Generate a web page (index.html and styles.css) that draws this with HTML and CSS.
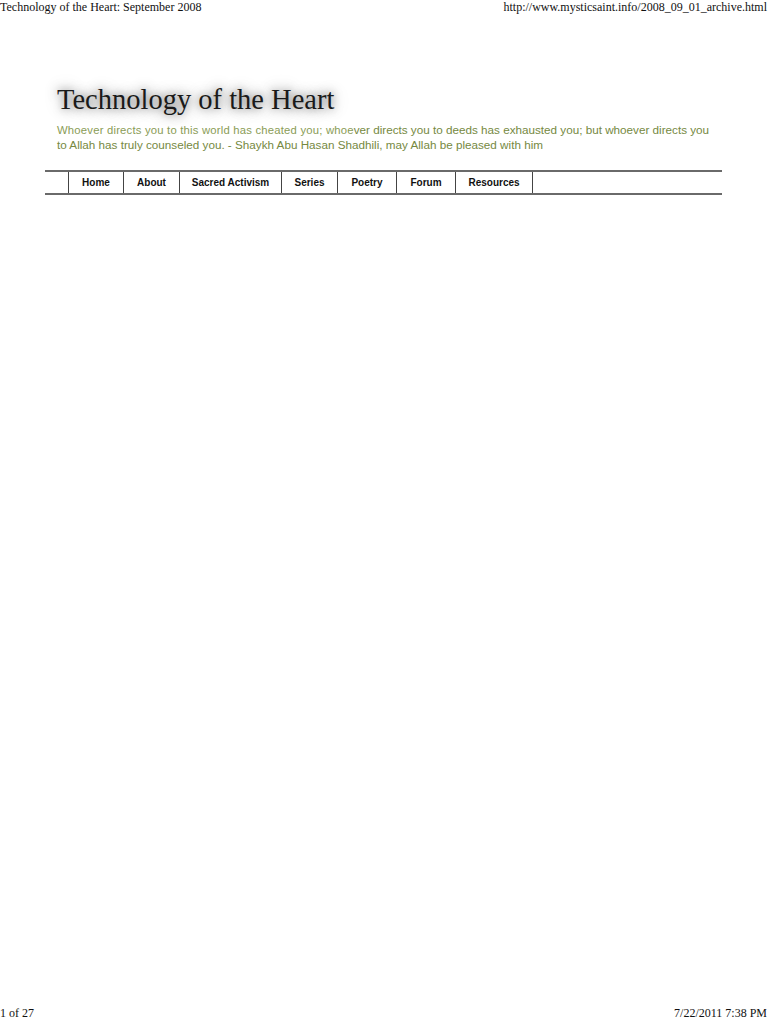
FILE: index.html
```html
<!DOCTYPE html>
<html>
<head>
<meta charset="utf-8">
<link rel="stylesheet" href="styles.css">
</head>
<body>
<div class="page">
  <div class="printhead">
    <span>Technology of the Heart: September 2008</span>
    <span>http://www.mysticsaint.info/2008_09_01_archive.html</span>
  </div>
  <div class="content">
    <div class="masthead">
      <h1 class="title">Technology of the Heart</h1>
      <p class="quote"><span class="q1">Whoever directs you to this world has cheated you; whoe</span>ver directs you to deeds has exhausted you; but whoever directs you to Allah has truly counseled you. - Shaykh Abu Hasan Shadhili, may Allah be pleased with him</p>
    </div>
    <nav class="nav">
      <div class="cell lead"></div>
      <div class="cell w55">Home</div>
      <div class="cell w56">About</div>
      <div class="cell w102">Sacred Activism</div>
      <div class="cell w56">Series</div>
      <div class="cell w59">Poetry</div>
      <div class="cell w59">Forum</div>
      <div class="cell w77">Resources</div>
      <div class="cell rest"></div>
    </nav>
  </div>
  <div class="printfoot">
    <span>1 of 27</span>
    <span>7/22/2011 7:38 PM</span>
  </div>
</div>
</body>
</html>
```

FILE: styles.css
```css
html, body {
  margin: 0;
  padding: 0;
  background: #ffffff;
}
.page {
  width: 768px;
  height: 1024px;
  display: flex;
  flex-direction: column;
  font-family: "Liberation Serif", serif;
  color: #111;
}
.printhead, .printfoot {
  display: flex;
  justify-content: space-between;
  font-size: 12px;
  line-height: 14px;
  padding: 0 1px 0 0;
}
.printhead {
  height: 14px;
}
.printfoot {
  height: 14px;
  margin-top: auto;
  padding-bottom: 4px;
}
.content {
  padding: 70px 46px 0 45px;
}
.masthead {
  padding-left: 12px;
}
.title {
  margin: 0;
  font-family: "Liberation Serif", serif;
  font-weight: normal;
  font-size: 28.5px;
  line-height: 32px;
  color: #1a1a1a;
  text-shadow: 0 0 10px rgba(0, 0, 0, 0.55), 0 0 18px rgba(0, 0, 0, 0.3);
}
.quote {
  margin: 6px 0 0 0;
  font-family: "Liberation Sans", Arial, sans-serif;
  font-size: 11.7px;
  line-height: 15px;
  color: #76893f;
  width: 665px;
}
.q1 {
  font-size: 11.3px;
  line-height: 11px;
  letter-spacing: 0.2px;
  color: #8a9c56;
}
.nav {
  margin-top: 18px;
  display: flex;
  border-top: 2px solid #6a6a6a;
  border-bottom: 2px solid #6a6a6a;
  height: 21px;
}
.cell {
  box-sizing: border-box;
  border-right: 1px solid #444;
  font-family: "Liberation Sans", Arial, sans-serif;
  font-weight: bold;
  font-size: 10px;
  line-height: 21px;
  text-align: center;
  color: #111;
}
.lead { width: 24px; }
.w55 { width: 55px; }
.w56 { width: 56px; }
.w102 { width: 102px; }
.w59 { width: 59px; }
.w77 { width: 77px; }
.rest { flex: 1; border-right: none; }
```
